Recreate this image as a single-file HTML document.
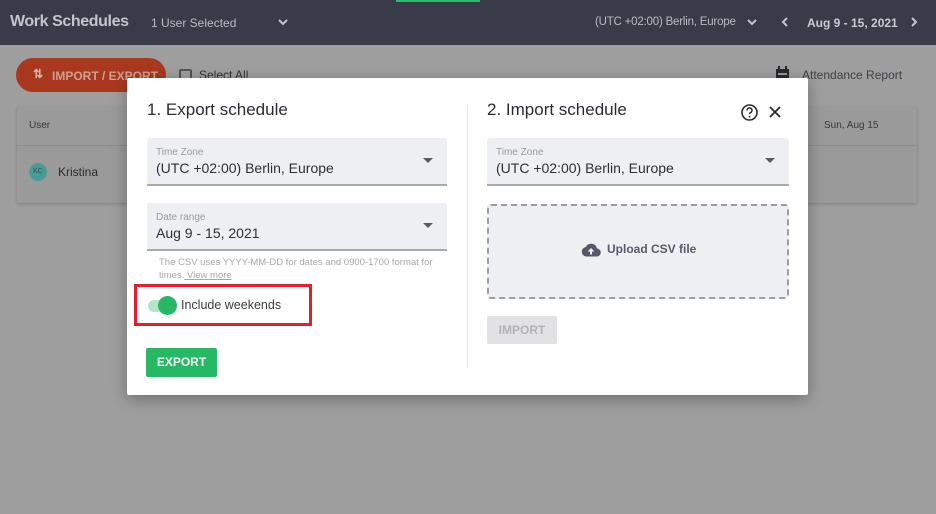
<!DOCTYPE html>
<html><head><meta charset="utf-8"><style>
*{box-sizing:border-box;margin:0;padding:0}
body{width:936px;height:514px;overflow:hidden;font-family:"Liberation Sans",sans-serif;background:#9e9e9f;position:relative}
.hdr{position:absolute;left:0;top:0;width:936px;height:45px;background:#393b48;color:#b9bbc2}
.abs{position:absolute}
.modal{position:absolute;left:127px;top:78px;width:681px;height:317px;background:#fff;border-radius:2px;box-shadow:0 4px 16px rgba(0,0,0,.3)}
.field{position:absolute;background:#eeeff2;border-bottom:2px solid #a8a9ad;border-radius:3px 3px 0 0}
.field .l{position:absolute;left:9px;top:9px;font-size:10px;color:#9a9ba0}
.field .v{position:absolute;left:9px;top:22px;font-size:14px;color:#2f3036}
.field .a{position:absolute;right:14px;top:20px;width:0;height:0;border-left:5px solid transparent;border-right:5px solid transparent;border-top:5px solid #5a5b60}
h2{position:absolute;font-weight:normal;font-size:17px;color:#2b2c33}
</style></head><body>
<div class="hdr">
<div class="abs" style="left:396px;top:0;width:84px;height:2px;background:#2dbb6a"></div>
<div class="abs" style="left:10px;top:13px;font-size:16px;font-weight:bold;color:#c3c5cc;letter-spacing:-0.4px">Work Schedules</div>
<div class="abs" style="left:151px;top:16px;font-size:12px">1 User Selected</div>
<svg class="abs" style="left:277px;top:17px" width="12" height="10"><path d="M2 3l4 4 4-4" stroke="#c3c5cc" stroke-width="2" fill="none"/></svg>
<div class="abs" style="left:595px;top:16px;font-size:11.5px;letter-spacing:-0.2px">(UTC +02:00) Berlin, Europe</div>
<svg class="abs" style="left:746px;top:17px" width="12" height="10"><path d="M2 3l4 4 4-4" stroke="#c3c5cc" stroke-width="2" fill="none"/></svg>
<svg class="abs" style="left:780px;top:16px" width="10" height="12"><path d="M7 2L3 6l4 4" stroke="#c3c5cc" stroke-width="2" fill="none"/></svg>
<div class="abs" style="left:807px;top:16px;font-size:12px;color:#c9cbd1;font-weight:bold">Aug 9 - 15, 2021</div>
<svg class="abs" style="left:909px;top:16px" width="10" height="12"><path d="M3 2l4 4-4 4" stroke="#c3c5cc" stroke-width="2" fill="none"/></svg>
</div>
<div class="abs" style="left:16px;top:58px;width:150px;height:34px;border-radius:17px;background:#a8391e;color:#cf9f92;font-size:12px;font-weight:bold;padding:11px 0 0 36px">IMPORT / EXPORT</div>
<div class="abs" style="left:33px;top:67px;color:#d8b5ab;font-size:12px;font-weight:bold">⇅</div>
<div class="abs" style="left:179px;top:69px;width:13px;height:13px;border:2px solid #555;border-radius:2px"></div>
<div class="abs" style="left:199px;top:68px;font-size:12px;color:#333">Select All</div>
<svg class="abs" style="left:775px;top:66px" width="15" height="15"><rect x="1" y="3" width="13" height="11" fill="#2a2a2e"/><rect x="3" y="0" width="2" height="4" fill="#2a2a2e"/><rect x="10" y="0" width="2" height="4" fill="#2a2a2e"/><rect x="3" y="7" width="9" height="2" fill="#9b9b9c"/></svg>
<div class="abs" style="left:802px;top:68px;font-size:12px;color:#2f3036;opacity:.85">Attendance Report</div>
<div class="abs" style="left:17px;top:107px;width:900px;height:96px;background:#9a9a9b;box-shadow:0 1px 3px rgba(0,0,0,.2)"></div>
<div class="abs" style="left:17px;top:145px;width:900px;height:1px;background:#8c8c8e"></div>
<div class="abs" style="left:29px;top:120px;font-size:10px;color:#3a3a3e">User</div>
<div class="abs" style="left:824px;top:120px;font-size:10px;color:#3a3a3e">Sun, Aug 15</div>
<div class="abs" style="left:29px;top:163px;width:18px;height:18px;border-radius:50%;background:#4a9a96;font-size:7px;color:#2a5b58;text-align:center;line-height:18px">KC</div>
<div class="abs" style="left:58px;top:165px;font-size:12px;color:#2b2b2e">Kristina</div>

<div class="modal">
<h2 style="left:20px;top:22px">1. Export schedule</h2>
<h2 style="left:360px;top:22px">2. Import schedule</h2>
<svg class="abs" style="left:613px;top:25px" width="19" height="19"><circle cx="9.5" cy="9.5" r="7.5" stroke="#2b2c33" stroke-width="1.6" fill="none"/><path d="M7 7.5a2.5 2.5 0 1 1 3.5 2.2c-.8.4-1 .8-1 1.6" stroke="#2b2c33" stroke-width="1.5" fill="none"/><circle cx="9.5" cy="13.8" r=".9" fill="#2b2c33"/></svg>
<svg class="abs" style="left:641px;top:27px" width="14" height="14"><path d="M2 2l10 10M12 2L2 12" stroke="#2b2c33" stroke-width="1.8"/></svg>
<div class="abs" style="left:340px;top:27px;width:1px;height:263px;background:#e4e4e6"></div>
<div class="field" style="left:20px;top:60px;width:300px;height:48px"><div class="l">Time Zone</div><div class="v">(UTC +02:00) Berlin, Europe</div><div class="a"></div></div>
<div class="field" style="left:20px;top:125px;width:300px;height:48px"><div class="l">Date range</div><div class="v">Aug 9 - 15, 2021</div><div class="a"></div></div>
<div class="abs" style="left:32px;top:178px;font-size:9.5px;color:#a5a6ab;line-height:13px;width:290px">The CSV uses YYYY-MM-DD for dates and 0900-1700 format for times.<span style="text-decoration:underline"> View more</span></div>
<div class="abs" style="left:7px;top:206px;width:178px;height:42px;border:3px solid #e0202e"></div>
<div class="abs" style="left:21px;top:222px;width:28px;height:12px;border-radius:6px;background:#b5e5c8"></div>
<div class="abs" style="left:31px;top:218px;width:19px;height:19px;border-radius:50%;background:#27b865"></div>
<div class="abs" style="left:54px;top:220px;font-size:12.5px;color:#3a3b40">Include weekends</div>
<div class="abs" style="left:19px;top:270px;width:71px;height:29px;border-radius:2px;background:#27b865;color:#eafaf0;font-size:12px;font-weight:bold;text-align:center;line-height:29px">EXPORT</div>
<div class="field" style="left:360px;top:60px;width:302px;height:48px"><div class="l">Time Zone</div><div class="v">(UTC +02:00) Berlin, Europe</div><div class="a"></div></div>
<div class="abs" style="left:360px;top:126px;width:302px;height:95px;background:#eeeff3;border:2px dashed #9c9ca3;border-radius:4px"></div>
<svg class="abs" style="left:454px;top:164px" width="20" height="15"><path d="M16 6.5A6 6 0 0 0 4.8 5 4.8 4.8 0 0 0 5 14.5h10.5a4 4 0 0 0 .5-8z" fill="#55566a"/><path d="M10 6l-3.5 3.5H9v3h2v-3h2.5z" fill="#eeeff3"/></svg>
<div class="abs" style="left:480px;top:164px;font-size:12px;font-weight:bold;color:#585a6a">Upload CSV file</div>
<div class="abs" style="left:360px;top:238px;width:70px;height:28px;border-radius:2px;background:#e2e2e4;color:#b2b3b7;font-size:12px;font-weight:bold;text-align:center;line-height:28px">IMPORT</div>
</div>
</body></html>
